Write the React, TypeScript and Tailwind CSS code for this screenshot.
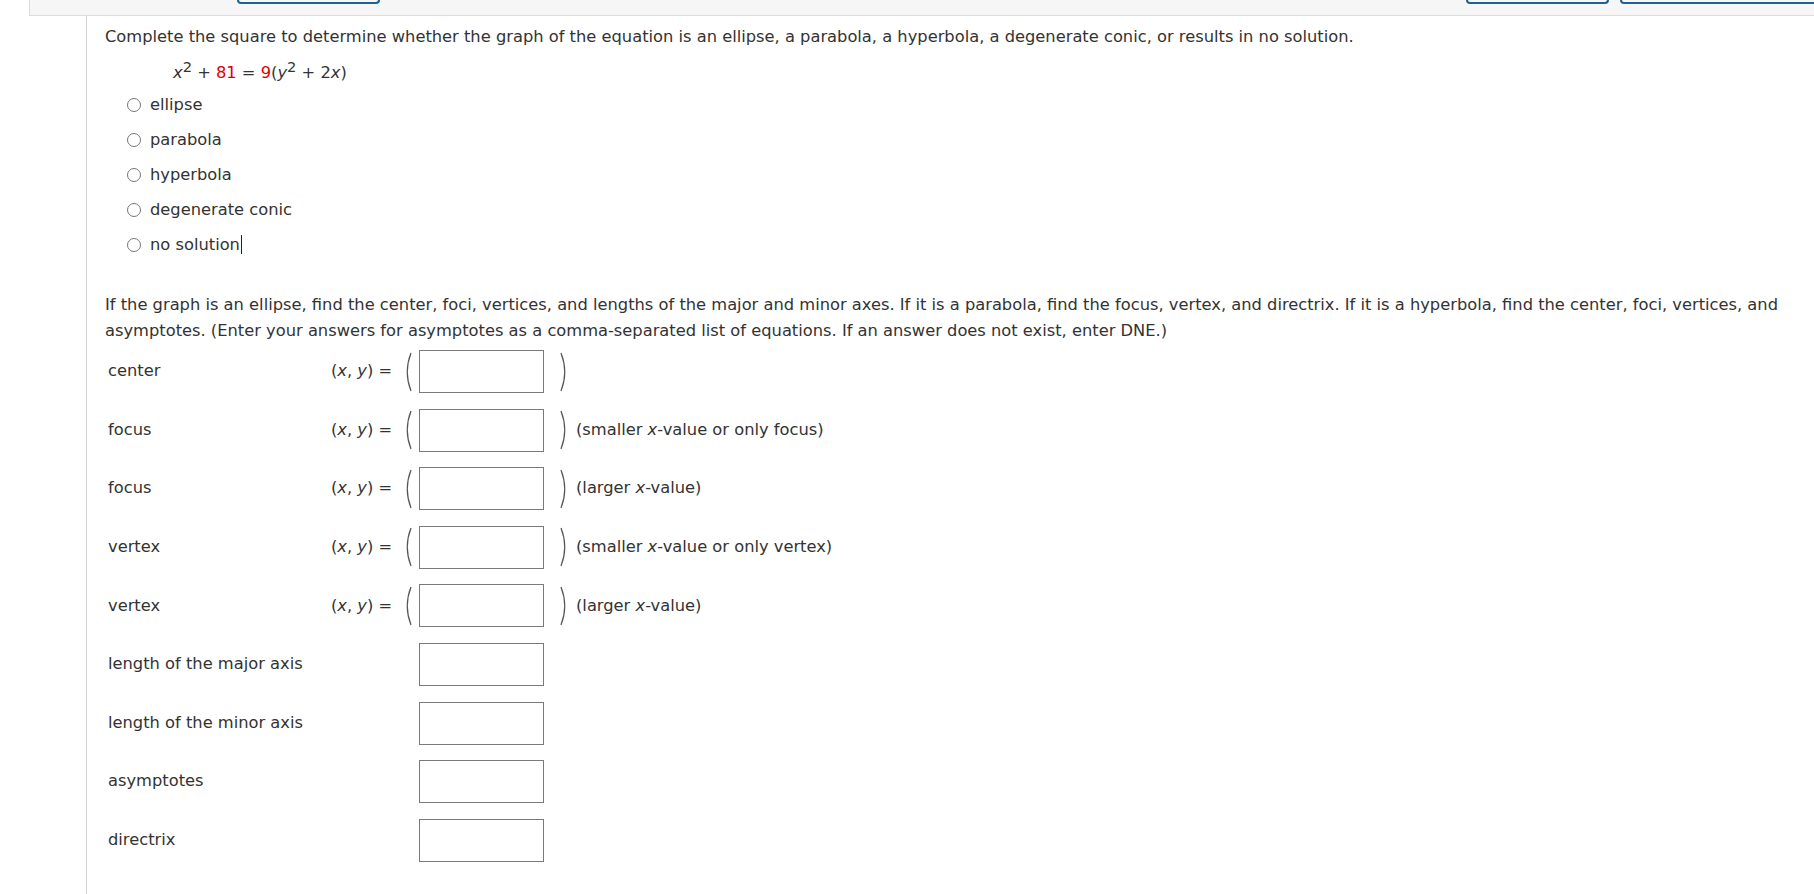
import React from "react";

const Paren = ({ right = false }: { right?: boolean }) => (
  <svg width="10" height="40" viewBox="0 0 10 40" className="block">
    {right ? (
      <path d="M2 1 Q9.5 20 2 39" stroke="#555" strokeWidth="1.2" fill="none" />
    ) : (
      <path d="M8 1 Q0.5 20 8 39" stroke="#555" strokeWidth="1.2" fill="none" />
    )}
  </svg>
);

const X = () => <i>x</i>;
const Y = () => <i>y</i>;

type Row = { label: string; point: boolean; note?: React.ReactNode };

const rows: Row[] = [
  { label: "center", point: true },
  { label: "focus", point: true, note: <>(smaller <X />-value or only focus)</> },
  { label: "focus", point: true, note: <>(larger <X />-value)</> },
  { label: "vertex", point: true, note: <>(smaller <X />-value or only vertex)</> },
  { label: "vertex", point: true, note: <>(larger <X />-value)</> },
  { label: "length of the major axis", point: false },
  { label: "length of the minor axis", point: false },
  { label: "asymptotes", point: false },
  { label: "directrix", point: false },
];

const options = ["ellipse", "parabola", "hyperbola", "degenerate conic", "no solution"];

export default function App() {
  return (
    <div className="min-h-screen bg-white text-[16.3px] text-[#333] font-['DejaVu_Sans',Verdana,sans-serif] overflow-hidden">
      <div className="ml-[29px] h-[16px] bg-[#f6f6f6] border-l border-b border-[#dcdcdc] flex items-start overflow-hidden">
        <div className="ml-[207px] w-[143px] h-[4px] shrink-0 border-2 border-t-0 border-[#1d6296] rounded-b-[5px]" />
        <div className="ml-[1086px] w-[143px] h-[4px] shrink-0 border-2 border-t-0 border-[#1d6296] rounded-b-[5px]" />
        <div className="ml-[11px] w-[260px] h-[4px] shrink-0 border-2 border-t-0 border-[#1d6296] rounded-b-[5px]" />
      </div>
      <div className="ml-[86px] border-l border-[#d0d0d0] min-h-[878px] pl-[18px] pr-[4px] pt-[10px]">
        <p className="leading-[22px] whitespace-nowrap">
          Complete the square to determine whether the graph of the equation is an ellipse, a parabola, a hyperbola, a degenerate conic, or results in no solution.
        </p>
        <div className="mt-[14px] ml-[68px] leading-[22px] whitespace-nowrap">
          <i>x</i>
          <sup className="text-[0.9em] relative -top-[0.4em]">2</sup> + <span className="text-[#e00000]">81</span> ={" "}
          <span className="text-[#e00000]">9</span>(<i>y</i>
          <sup className="text-[0.9em] relative -top-[0.4em]">2</sup> + 2<i>x</i>)
        </div>
        <div className="mt-[3px] ml-[22px] flex flex-col">
          {options.map((o, i) => (
            <div key={o} className="h-[35px] flex items-center">
              <span className="w-[14px] h-[14px] rounded-full border-[1.5px] border-[#777] bg-white shrink-0" />
              <span className="ml-[9px] leading-[22px]">
                {o}
                {i === options.length - 1 && (
                  <span className="inline-block w-px h-[19px] bg-[#222] align-middle ml-px -mt-[2px]" />
                )}
              </span>
            </div>
          ))}
        </div>
        <p className="mt-[30px] leading-[26px]">
          If the graph is an ellipse, find the center, foci, vertices, and lengths of the major and minor axes. If it is a parabola, find the focus, vertex, and directrix. If it is a hyperbola, find the center, foci, vertices, and
          <br />
          asymptotes. (Enter your answers for asymptotes as a comma-separated list of equations. If an answer does not exist, enter DNE.)
        </p>
        <div className="mt-[6px] flex flex-col gap-[15.6px]">
          {rows.map((r, i) => (
            <div key={i} className="h-[43px] flex items-center whitespace-nowrap">
              <div className="w-[226px] pl-[3px] shrink-0">{r.label}</div>
              <div className="w-[72px] shrink-0">
                {r.point && (
                  <span>
                    (<X />, <Y />) =
                  </span>
                )}
              </div>
              <div className="w-[16px] shrink-0 flex justify-start">{r.point && <Paren />}</div>
              <div className="w-[125px] h-[43px] shrink-0 border border-[#7a7a7a] bg-white" />
              <div className="w-[32px] shrink-0 pl-[15px]">{r.point && <Paren right />}</div>
              {r.note && <div>{r.note}</div>}
            </div>
          ))}
        </div>
      </div>
    </div>
  );
}
